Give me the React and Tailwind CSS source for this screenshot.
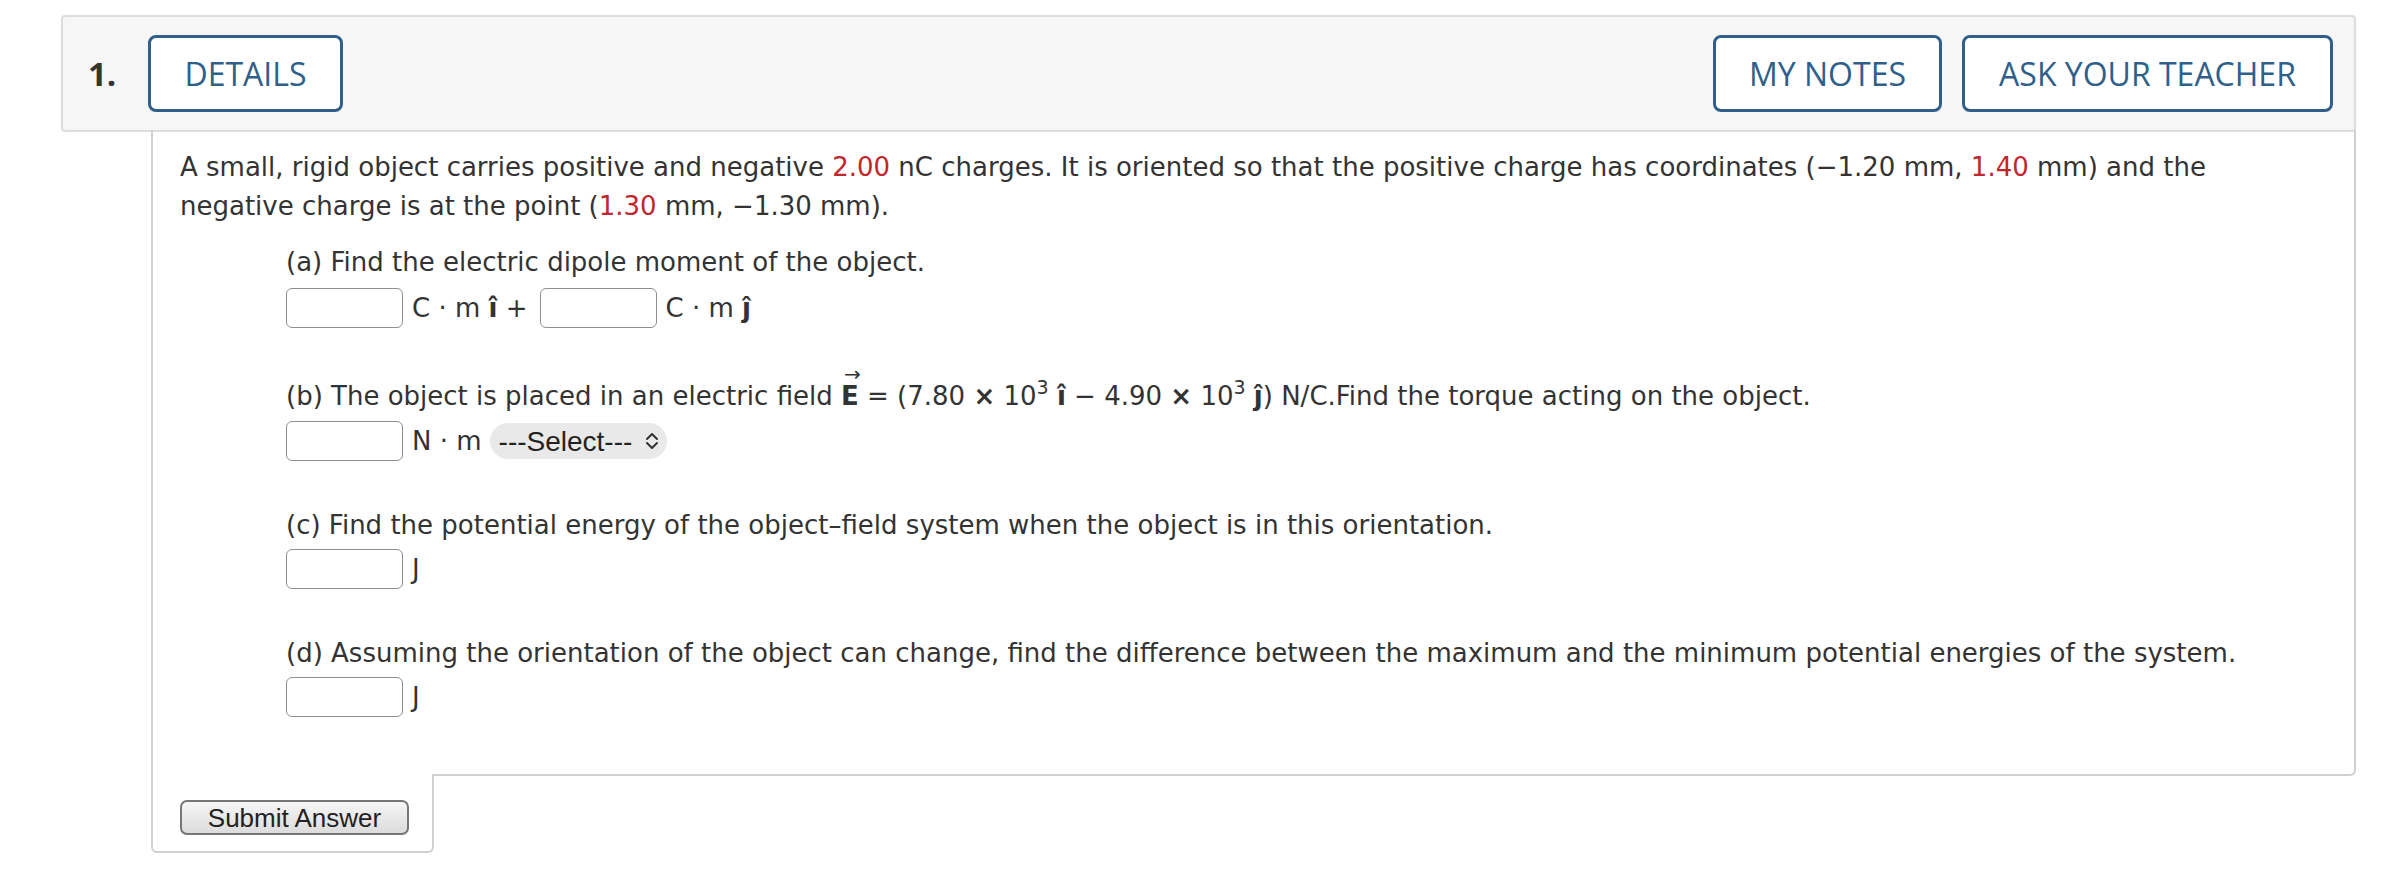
import React from 'react';

const AnswerBox = () => (
  <span className="inline-block w-[117px] h-[40px] border-[1.5px] border-[#8f8f8f] rounded-[6px] bg-white align-middle" />
);

const Red = ({ children }) => <span className="text-[#c1272d]">{children}</span>;

const HeaderButton = ({ children, width }) => (
  <button
    type="button"
    className={`${width} h-[77px] border-[3px] border-[#2f5f8a] rounded-[8px] bg-white text-[#2f5f8a] text-[32px] font-medium flex items-center justify-center`}
    style={{ fontFamily: '"Open Sans", sans-serif' }}
  >
    {children}
  </button>
);

const VecE = () => (
  <span className="relative inline-block font-bold">
    <span className="absolute left-[3px] -top-[13px] text-[20px] font-normal leading-none">→</span>
    E
  </span>
);

export default function App() {
  return (
    <div className="w-[2388px] h-[878px] bg-white text-[#333]" style={{ fontFamily: '"DejaVu Sans", Verdana, sans-serif' }}>
      <div className="pt-[15px]">
        {/* header bar */}
        <div className="ml-[61px] w-[2295px] h-[117px] bg-[#f6f6f6] border-2 border-[#dddddd] rounded-[4px] flex items-center pl-[25px] pr-[21px]">
          <span className="text-[33px] font-bold text-[#333] w-[60px]" style={{ fontFamily: '"Open Sans", sans-serif' }}>1.</span>
          <HeaderButton width="w-[195px]">DETAILS</HeaderButton>
          <div className="flex-1" />
          <div className="flex gap-[20px]">
            <HeaderButton width="w-[229px]">MY NOTES</HeaderButton>
            <HeaderButton width="w-[371px]">ASK YOUR TEACHER</HeaderButton>
          </div>
        </div>

        {/* question body */}
        <div className="ml-[151px] w-[2205px] -mt-[2px] border-2 border-t-0 border-[#d0d0d0] rounded-br-[6px] pt-[18px] pb-[56px] pl-[27px] pr-[80px] text-[26px] leading-[39px]">
          <p>
            A small, rigid object carries positive and negative <Red>2.00</Red> nC charges. It is oriented so that the positive charge has coordinates (−1.20 mm, <Red>1.40</Red> mm) and the negative charge is at the point (<Red>1.30</Red> mm, −1.30 mm).
          </p>

          <div className="ml-[106px] mt-[17px]">
            <p>(a) Find the electric dipole moment of the object.</p>
            <div className="mt-[6px] flex items-center h-[40px]">
              <AnswerBox />
              <span className="ml-[9px]">C · m <span className="font-bold">î</span> +</span>
              <span className="ml-[12px] flex"><AnswerBox /></span>
              <span className="ml-[9px]">C · m <span className="font-bold">ĵ</span></span>
            </div>
          </div>

          <div className="ml-[106px] mt-[49px]">
            <p>
              (b) The object is placed in an electric field <VecE /> = (7.80 <span className="font-bold">×</span> 10<sup className="text-[19px] -top-[0.6em]">3</sup> <span className="font-bold">î</span> − 4.90 <span className="font-bold">×</span> 10<sup className="text-[19px] -top-[0.6em]">3</sup> <span className="font-bold">ĵ</span>) N/C.Find the torque acting on the object.
            </p>
            <div className="mt-[4px] flex items-center h-[42px]">
              <AnswerBox />
              <span className="ml-[9px]">N · m</span>
              <span
                className="ml-[8px] w-[177px] h-[36px] rounded-full bg-[#e9e9e9] flex items-center pl-[9px] gap-[12px] text-[28px] text-[#222]"
                style={{ fontFamily: '"Liberation Sans", Arial, sans-serif' }}
              >
                ---Select---
                <svg width="16" height="20" viewBox="0 0 16 20" fill="none" stroke="#333" strokeWidth="2" strokeLinecap="round" strokeLinejoin="round">
                  <path d="M3 8 L8 3 L13 8" />
                  <path d="M3 12 L8 17 L13 12" />
                </svg>
              </span>
            </div>
          </div>

          <div className="ml-[106px] mt-[44px]">
            <p>(c) Find the potential energy of the object–field system when the object is in this orientation.</p>
            <div className="mt-[3px] flex items-center h-[42px]">
              <AnswerBox />
              <span className="ml-[9px]">J</span>
            </div>
          </div>

          <div className="ml-[106px] mt-[44px]">
            <p>(d) Assuming the orientation of the object can change, find the difference between the maximum and the minimum potential energies of the system.</p>
            <div className="mt-[3px] flex items-center h-[42px]">
              <AnswerBox />
              <span className="ml-[9px]">J</span>
            </div>
          </div>
        </div>

        {/* submit tab */}
        <div className="ml-[151px] w-[283px] h-[79px] -mt-[2px] border-2 border-t-0 border-[#d0d0d0] rounded-b-[6px] pl-[27px] pt-[26px] bg-white">
          <button
            type="button"
            className="w-[229px] h-[35px] border-2 border-[#767676] rounded-[7px] bg-gradient-to-b from-[#f6f6f6] to-[#dcdcdc] text-[26px] text-[#222] leading-none"
            style={{ fontFamily: '"Liberation Sans", Arial, sans-serif' }}
          >
            Submit Answer
          </button>
        </div>
      </div>
    </div>
  );
}
